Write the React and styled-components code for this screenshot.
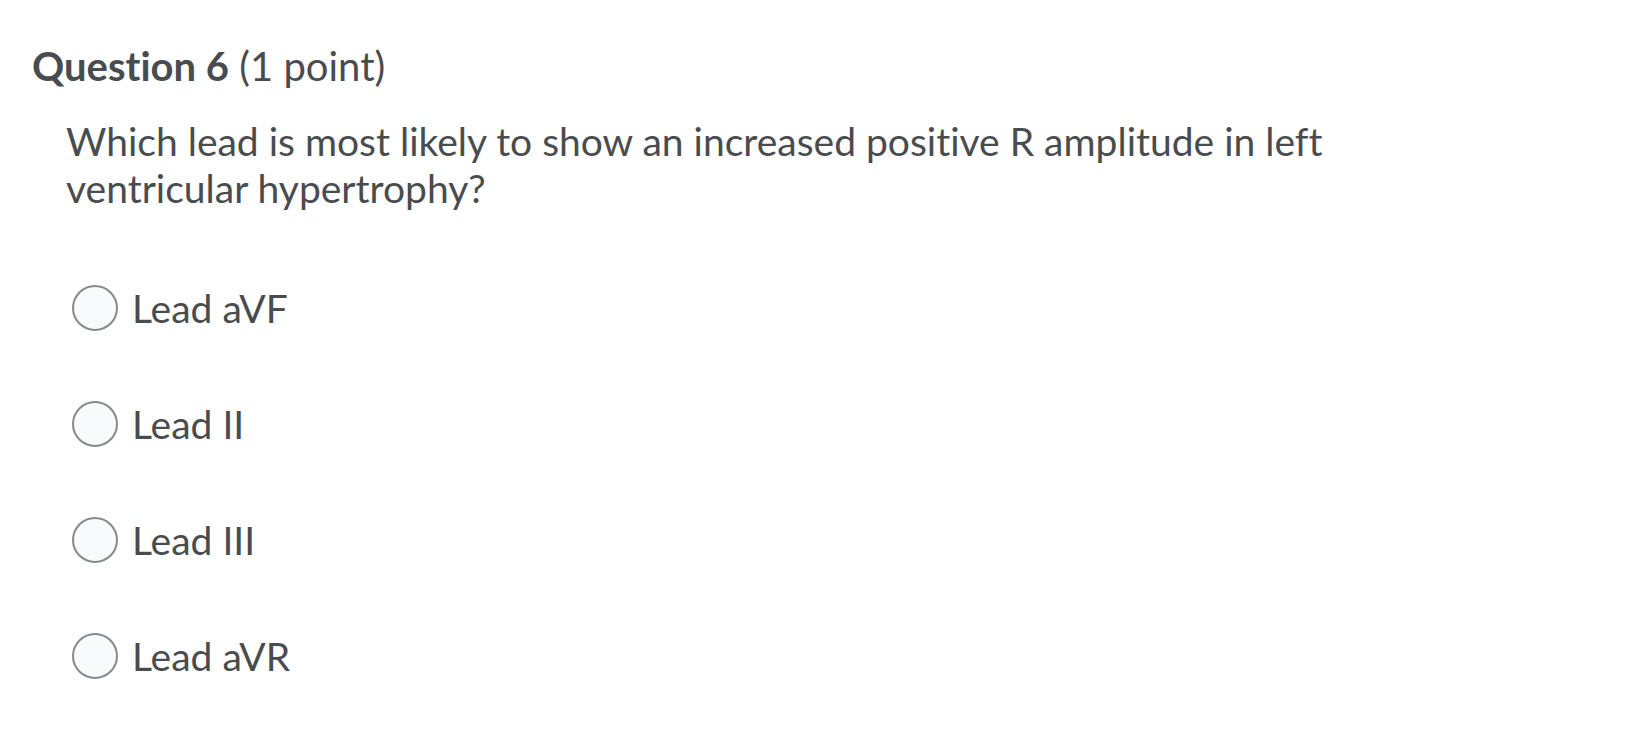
import React from 'react';
import styled, { createGlobalStyle } from 'styled-components';

const Global = createGlobalStyle`
  body {
    margin: 0;
    background: #ffffff;
    font-family: Lato, "Open Sans", sans-serif;
    font-variant-ligatures: no-common-ligatures;
    color: #494c4e;
  }
`;

const Page = styled.div`
  padding: 42px 0 0 32px;
`;

const Title = styled.h2`
  margin: 0;
  font-size: 40px;
  font-weight: 400;
  line-height: 48px;
  strong {
    font-weight: 700;
  }
`;

const Body = styled.div`
  padding-left: 34px;
  max-width: 1300px;
`;

const Prompt = styled.p`
  margin: 28px 0 0;
  font-size: 39px;
  line-height: 47px;
`;

const Options = styled.div`
  display: flex;
  flex-direction: column;
  gap: 70px;
  margin-top: 73px;
`;

const Option = styled.label`
  display: flex;
  align-items: center;
  gap: 14px;
  font-size: 39px;
  line-height: 46px;
`;

const Radio = styled.span`
  box-sizing: border-box;
  flex: none;
  width: 46px;
  height: 46px;
  margin-left: 6px;
  border-radius: 50%;
  border: 2px solid #868a8e;
  background: #f9fafc;
`;

const answers = ['Lead aVF', 'Lead II', 'Lead III', 'Lead aVR'];

const App = () => {
  return (
    <Page>
      <Global />
      <Title>
        <strong>Question 6</strong> (1 point)
      </Title>
      <Body>
        <Prompt>
          Which lead is most likely to show an increased positive R amplitude in left
          ventricular hypertrophy?
        </Prompt>
        <Options>
          {answers.map((a) => (
            <Option key={a}>
              <Radio />
              {a}
            </Option>
          ))}
        </Options>
      </Body>
    </Page>
  );
};

export default App;
